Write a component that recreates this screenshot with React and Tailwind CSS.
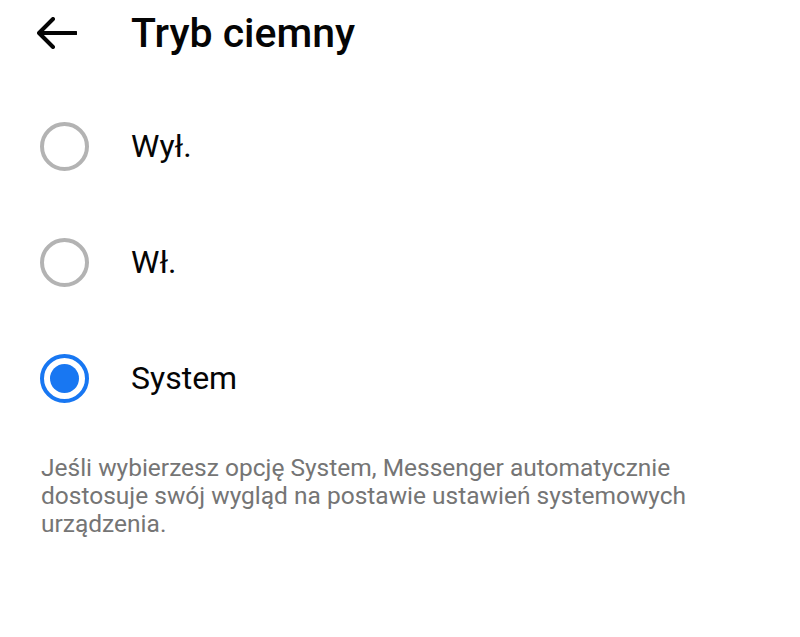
export default function App() {
    const options = [
        { label: 'Wył.', checked: false },
        { label: 'Wł.', checked: false },
        { label: 'System', checked: true },
    ];

    return (
        <div className="w-[800px] h-[637px] bg-white text-[#050505] font-['Roboto',sans-serif] overflow-hidden">
            {/* header */}
            <header className="flex items-center h-[66px] pl-[37px]">
                <svg width="40" height="32" viewBox="0 0 40 32" fill="none" className="shrink-0">
                    <path d="M39 16H3M16 2L2 16l14 14" stroke="#050505" strokeWidth="4" strokeLinecap="round" strokeLinejoin="round" />
                </svg>
                <h1 className="ml-[54px] text-[41px] leading-none font-medium">Tryb ciemny</h1>
            </header>

            {/* options */}
            <div className="mt-[22px]">
                {options.map((o) => (
                    <div key={o.label} className="flex items-center h-[116px] pl-[40px]">
                        {o.checked ? (
                            <div className="flex items-center justify-center w-[49px] h-[49px] rounded-full border-4 border-[#1877f2]">
                                <div className="w-[29px] h-[29px] rounded-full bg-[#1877f2]" />
                            </div>
                        ) : (
                            <div className="w-[49px] h-[49px] rounded-full border-4 border-[#b3b3b3]" />
                        )}
                        <span className="ml-[42px] text-[32px] leading-none">{o.label}</span>
                    </div>
                ))}
            </div>

            {/* description */}
            <p className="mt-[18px] pl-[41px] pr-[40px] text-[24.5px] leading-[28px] text-[#757575]">
                Jeśli wybierzesz opcję System, Messenger automatycznie
                <br />
                dostosuje swój wygląd na postawie ustawień systemowych
                <br />
                urządzenia.
            </p>
        </div>
    );
}
